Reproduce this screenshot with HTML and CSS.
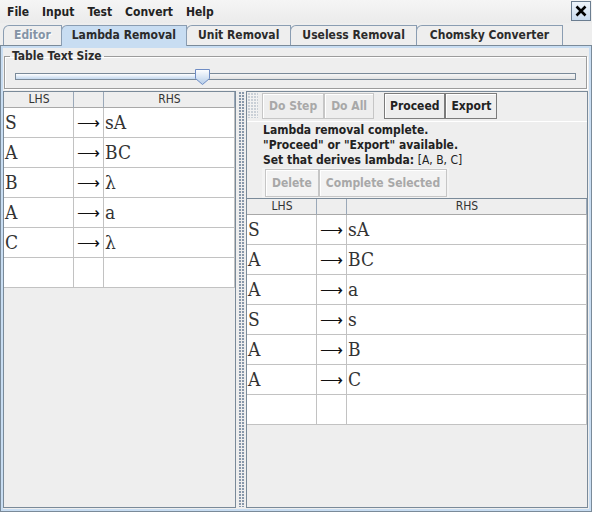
FILE: index.html
```html
<!DOCTYPE html>
<html>
<head>
<meta charset="utf-8">
<link rel="stylesheet" href="styles.css">
</head>
<body>
<div class="menubar">
  <span class="menu">File</span>
  <span class="menu">Input</span>
  <span class="menu">Test</span>
  <span class="menu">Convert</span>
  <span class="menu">Help</span>
  <button class="close" aria-label="Close"><svg width="12" height="12" viewBox="0 0 12 12"><path d="M1.5 1.5L10.5 10.5M10.5 1.5L1.5 10.5" stroke="#000" stroke-width="2.6"/></svg></button>
</div>
<div class="tabs">
  <div class="tab disabled">Editor</div>
  <div class="tab selected">Lambda Removal</div>
  <div class="tab">Unit Removal</div>
  <div class="tab">Useless Removal</div>
  <div class="tab last">Chomsky Converter</div>
</div>
<div class="content">
  <fieldset class="sizebox">
    <legend>Table Text Size</legend>
    <div class="slider">
      <div class="track"><div class="fill" style="width:187px"></div></div>
      <svg class="thumb" width="15" height="16" viewBox="0 0 15 16"><defs><linearGradient id="tg" x1="0" y1="0" x2="0" y2="1"><stop offset="0" stop-color="#ffffff"/><stop offset="1" stop-color="#b4cce8"/></linearGradient></defs><path d="M0.5 0.5H14.5V9.5L7.5 15.5L0.5 9.5Z" fill="url(#tg)" stroke="#6e8cc4"/></svg>
    </div>
  </fieldset>
  <div class="split">
    <div class="pane left">
      <div class="grammar">
        <div class="row head"><div class="cell">LHS</div><div class="cell"></div><div class="cell">RHS</div></div>
        <div class="row"><div class="cell">S</div><div class="cell arrow">⟶</div><div class="cell">sA</div></div>
        <div class="row"><div class="cell">A</div><div class="cell arrow">⟶</div><div class="cell">BC</div></div>
        <div class="row"><div class="cell">B</div><div class="cell arrow">⟶</div><div class="cell">λ</div></div>
        <div class="row"><div class="cell">A</div><div class="cell arrow">⟶</div><div class="cell">a</div></div>
        <div class="row"><div class="cell">C</div><div class="cell arrow">⟶</div><div class="cell">λ</div></div>
        <div class="row"><div class="cell"></div><div class="cell arrow"></div><div class="cell"></div></div>
      </div>
    </div>
    <div class="divider"><div class="dots"></div></div>
    <div class="pane right">
      <div class="toolbar">
        <div class="grip"></div>
        <button class="btn off">Do Step</button>
        <button class="btn off">Do All</button>
        <button class="btn on gap">Proceed</button>
        <button class="btn on">Export</button>
      </div>
      <div class="status">
        <div>Lambda removal complete.</div>
        <div>"Proceed" or "Export" available.</div>
        <div>Set that derives lambda: <span class="plain">[A, B, C]</span></div>
      </div>
      <div class="actions">
        <button class="btn off tall">Delete</button>
        <button class="btn off tall">Complete Selected</button>
      </div>
      <div class="grammar boxed">
        <div class="row head"><div class="cell">LHS</div><div class="cell"></div><div class="cell">RHS</div></div>
        <div class="row"><div class="cell">S</div><div class="cell arrow">⟶</div><div class="cell">sA</div></div>
        <div class="row"><div class="cell">A</div><div class="cell arrow">⟶</div><div class="cell">BC</div></div>
        <div class="row"><div class="cell">A</div><div class="cell arrow">⟶</div><div class="cell">a</div></div>
        <div class="row"><div class="cell">S</div><div class="cell arrow">⟶</div><div class="cell">s</div></div>
        <div class="row"><div class="cell">A</div><div class="cell arrow">⟶</div><div class="cell">B</div></div>
        <div class="row"><div class="cell">A</div><div class="cell arrow">⟶</div><div class="cell">C</div></div>
        <div class="row"><div class="cell"></div><div class="cell arrow"></div><div class="cell"></div></div>
      </div>
    </div>
  </div>
</div>
</body>
</html>
```
FILE: styles.css
```css
html, body {
  margin: 0;
  padding: 0;
}
body {
  width: 592px;
  height: 512px;
  overflow: hidden;
  background: #eeeeee;
  font-family: "DejaVu Sans Condensed", "DejaVu Sans", sans-serif;
  font-stretch: semi-condensed;
  font-size: 12px;
  color: #333333;
  display: flex;
  flex-direction: column;
}

/* menu bar */
.menubar {
  height: 23px;
  box-sizing: border-box;
  padding: 3px 0 0 0.5px;
  display: flex;
  align-items: flex-start;
  line-height: 19px;
  font-weight: bold;
  background: linear-gradient(#f5f5f5, #ebebeb);
  color: #222;
}
.menu {
  padding: 0 6.5px;
}
.close {
  margin: -2px 1px 0 auto;
  width: 20px;
  height: 20px;
  padding: 0;
  border: 1px solid #6b7d90;
  background: linear-gradient(#eef4fa, #c9dbef);
  display: flex;
  align-items: center;
  justify-content: center;
}

/* tabs */
.tabs {
  height: 22px;
  box-sizing: border-box;
  display: flex;
  align-items: flex-end;
  padding-left: 3px;
}
.tab {
  height: 19px;
  line-height: 19px;
  padding: 0 11px;
  border: 1px solid #8a9db2;
  border-bottom: none;
  border-top-left-radius: 6px;
  margin-right: -1px;
  font-weight: bold;
  color: #2b2b2b;
  background: #eeeeee;
}
.tab.last {
  padding: 0 13px;
}
.tab.disabled {
  padding: 0 10px;
  color: #8494a6;
  text-shadow: 1px 1px 0 #ffffff;
}
.tab.selected {
  padding: 0 10px;
  background: #c8ddf2;
  position: relative;
  z-index: 1;
  height: 20px;
  margin-bottom: -1px;
}

/* content */
.content {
  flex: 1;
  min-height: 0;
  border: 1px solid #7a8a99;
  box-shadow: inset 0 0 0 2px #c8ddf2;
  padding: 2px;
  display: flex;
  flex-direction: column;
}

.sizebox {
  margin: 1px 2px 0 1px;
  padding: 0 10px;
  border: 1px solid #9c9c9c;
  box-shadow: 1px 1px 0 #ffffff, inset 1px 1px 0 #ffffff;
  min-width: 0;
}
.sizebox legend {
  padding: 0 2px;
  margin-left: -5px;
  font-weight: bold;
  line-height: 14px;
  color: #2b2b2b;
}
.slider {
  position: relative;
  height: 25px;
  box-sizing: border-box;
  padding-top: 10px;
}
.track {
  height: 7px;
  box-sizing: border-box;
  border: 1px solid #7a8a99;
  background: linear-gradient(#f6f6f6, #e2e2e2);
}
.fill {
  height: 100%;
  background: linear-gradient(#ffffff, #c2d7ee);
}
.thumb {
  position: absolute;
  left: 180px;
  top: 6px;
}

/* split */
.split {
  flex: 1;
  min-height: 0;
  display: flex;
  margin-top: 2px;
  margin-bottom: 1px;
}
.pane {
  border: 1px solid #7a8a99;
  box-sizing: border-box;
  background: #eeeeee;
  display: flex;
  flex-direction: column;
}
.pane.left {
  width: 233px;
}
.pane.right {
  flex: 1;
  margin-right: 1px;
}
.divider {
  width: 10px;
  display: flex;
  justify-content: center;
}
.dots {
  width: 5px;
  background-image: radial-gradient(circle at 1px 1px, #8595a8 0.7px, transparent 1.1px);
  background-size: 3px 3px;
  margin: 1px 0;
}

/* grammar tables */
.row {
  display: grid;
  grid-template-columns: 70px 30px 1fr;
  height: 30px;
  background: #ffffff;
}
.cell {
  box-sizing: border-box;
  border-right: 1px solid #c2c2c2;
  border-bottom: 1px solid #c2c2c2;
  padding-left: 1px;
  font-family: "DejaVu Serif Condensed", "DejaVu Serif", serif;
  font-stretch: semi-condensed;
  font-size: 19px;
  line-height: 29px;
  color: #333333;
  white-space: nowrap;
  overflow: hidden;
}
.cell.arrow {
  text-align: right;
  padding-right: 3px;
  font-family: "DejaVu Sans", sans-serif;
  font-stretch: normal;
  font-weight: 200;
  font-size: 16px;
  color: #111;
}
.row.head {
  height: 16px;
  background: #eeeeee;
}
.row.head .cell {
  font-family: "DejaVu Sans Condensed", "DejaVu Sans", sans-serif;
  font-size: 12px;
  line-height: 15px;
  text-align: center;
  border-right-color: #9aa8b8;
  border-bottom-color: #a8a8a8;
  color: #333;
}
.grammar.boxed {
  border-top: 1px solid #7a8a99;
}

/* toolbar */
.toolbar {
  height: 30px;
  box-sizing: border-box;
  padding: 1px 0 3px 1px;
  display: flex;
  border-bottom: 1px solid #ffffff;
}
.grip {
  width: 10px;
  margin-right: 4px;
  background-color: #f2f2f2;
  background-image: radial-gradient(circle at 1px 1px, #b4bdc8 0.6px, transparent 0.9px);
  background-size: 3px 3px;
  box-sizing: border-box;
}
.btn {
  height: 26px;
  box-sizing: border-box;
  padding: 0 5px;
  border: 1px solid #7b7b7b;
  background: transparent;
  font-family: inherit;
  font-stretch: inherit;
  font-size: 12px;
  font-weight: bold;
  color: #222;
  box-shadow: inset 1px 1px 0 #ffffff;
}
.btn.off {
  padding: 0 6px;
  color: #a8a8a8;
  border-color: #c6c6c6;
}
.btn.gap {
  margin-left: 10px;
}
.btn.tall {
  height: 28px;
}

.status {
  margin-top: 1px;
  padding-left: 16px;
  line-height: 15px;
  font-weight: bold;
  color: #222;
}
.status .plain {
  font-weight: normal;
}
.actions {
  align-self: flex-start;
  margin-left: 15px;
  padding: 1px 2px 1px 3px;
  background: #f3f3f3;
  display: flex;
}
```
